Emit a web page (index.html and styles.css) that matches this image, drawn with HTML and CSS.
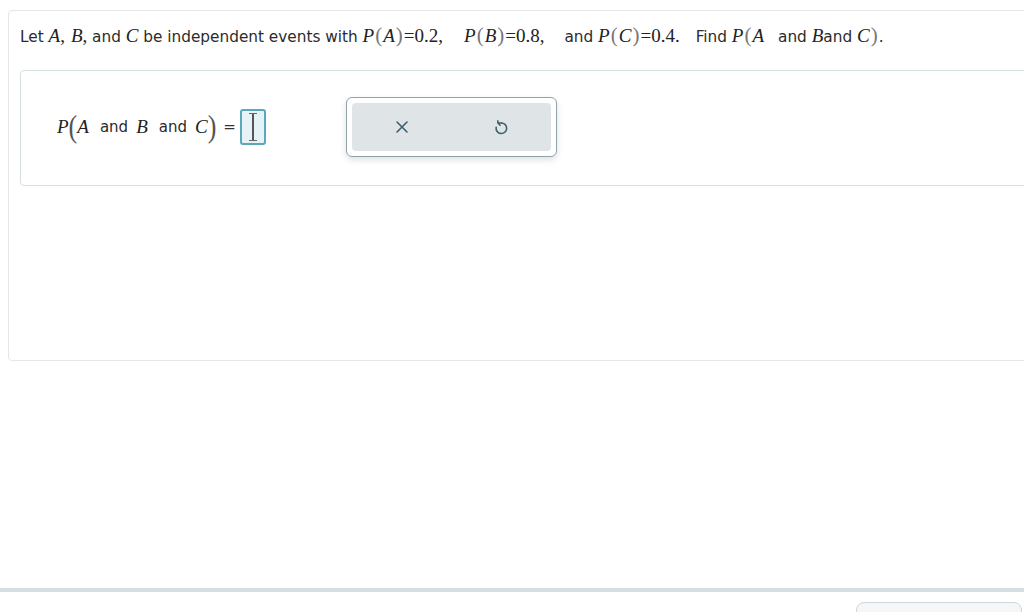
FILE: index.html
```html
<!DOCTYPE html>
<html>
<head>
<meta charset="utf-8">
<link rel="stylesheet" href="styles.css">
</head>
<body>
<div class="page">
  <div class="card">
    <div class="question">
      <span class="txt">Let </span><span class="mi">A</span><span class="mo">,</span><span class="sp4"></span><span class="mi">B</span><span class="mo">,</span><span class="txt"> and </span><span class="mi">C</span><span class="txt"> be independent events with </span><span class="mi">P</span><span class="paren">(</span><span class="mi">A</span><span class="paren">)</span><span class="mo eq">=</span><span class="mn">0.2,</span><span class="sp-wide"></span><span class="mi">P</span><span class="paren">(</span><span class="mi">B</span><span class="paren">)</span><span class="mo eq">=</span><span class="mn">0.8,</span><span class="sp-mid"></span><span class="txt">and </span><span class="mi">P</span><span class="paren">(</span><span class="mi">C</span><span class="paren">)</span><span class="mo eq">=</span><span class="mn">0.4.</span><span class="sp-find"></span><span class="txt">Find </span><span class="mi">P</span><span class="paren">(</span><span class="mi">A</span><span class="sp-mid2"></span><span class="txt">and </span><span class="mi">B</span><span class="txt">and </span><span class="mi">C</span><span class="paren">)</span><span class="txt">.</span>
    </div>
    <div class="answer">
      <div class="expr">
        <span class="mi">P</span><span class="bigparen">(</span><span class="mi">A</span><span class="txt sp-txt">and</span><span class="mi">B</span><span class="txt sp-txt">and</span><span class="mi">C</span><span class="bigparen">)</span><span class="equals">=</span>
        <span class="input"><span class="cursor"></span></span>
      </div>
      <div class="tools">
        <div class="tools-inner">
          <button class="tool" aria-label="clear">
            <svg width="14" height="14" viewBox="0 0 14 14"><path d="M2 2 L12 12 M12 2 L2 12" stroke="#3e5f6b" stroke-width="1.6" fill="none" stroke-linecap="round"/></svg>
          </button>
          <button class="tool" aria-label="undo">
            <svg width="18" height="18" viewBox="0 0 16 16"><path d="M8.3 4.4 A4.7 4.7 0 1 1 3.7 8.3" stroke="#3e5f6b" stroke-width="1.4" fill="none" stroke-linecap="round"/><path d="M8.3 4.4 L5.2 4.4 M5.2 4.4 L5.2 2.4 M5.2 4.4 L7.2 6.4" stroke="#3e5f6b" stroke-width="1.4" fill="none" stroke-linecap="round" stroke-linejoin="round"/></svg>
          </button>
        </div>
      </div>
    </div>
  </div>
  <div class="footer">
    <div class="footer-bar"></div>
    <div class="footer-row">
      <div class="footer-btn"></div>
    </div>
  </div>
</div>
</body>
</html>
```
FILE: styles.css
```css
html, body {
  margin: 0;
  padding: 0;
  background: #ffffff;
}
body {
  font-family: "DejaVu Sans", Verdana, sans-serif;
  font-size: 15px;
  color: #2b2b2b;
  overflow: hidden;
}
.page {
  width: 1024px;
  height: 612px;
  overflow: hidden;
  display: flex;
  flex-direction: column;
}
.card {
  margin: 10px 0 0 8px;
  width: 1100px;
  height: 351px;
  box-sizing: border-box;
  border: 1px solid #e2e8e9;
  border-radius: 4px;
  padding: 11px 0 0 11px;
  flex-shrink: 0;
}
.question {
  height: 26px;
  line-height: 26px;
  white-space: nowrap;
  font-size: 15px;
}
.txt {
  font-family: "DejaVu Sans", Verdana, sans-serif;
  font-size: 15.3px;
  color: #2b2b2b;
}
.mi {
  font-family: "Liberation Serif", "Times New Roman", serif;
  font-style: italic;
  font-size: 19px;
  color: #222;
}
.mn, .mo {
  font-family: "Liberation Serif", "Times New Roman", serif;
  font-size: 19px;
  color: #222;
}
.eq {
  padding: 0;
}
.sp4 {
  display: inline-block;
  width: 6px;
}
.sp-wide {
  display: inline-block;
  width: 21px;
}
.sp-mid {
  display: inline-block;
  width: 20px;
}
.sp-find {
  display: inline-block;
  width: 16px;
}
.sp-mid2 {
  display: inline-block;
  width: 14px;
}
.paren {
  font-family: "Liberation Serif", "Times New Roman", serif;
  font-size: 21px;
  color: #777;
  padding: 0 1px;
}
.answer {
  margin-top: 22px;
  height: 116px;
  box-sizing: border-box;
  border: 1px solid #d4dfe2;
  border-radius: 4px;
  display: flex;
  align-items: center;
  padding: 0 0 2px 36px;
}
.expr {
  display: flex;
  align-items: center;
  white-space: nowrap;
}
.expr .mi {
  font-size: 19px;
}
.sp-txt {
  margin: 0 8px 0 11px;
  font-size: 15px;
}
.bigparen {
  font-family: "Liberation Serif", "Times New Roman", serif;
  font-size: 26px;
  color: #555;
  transform: scaleY(1.2);
  margin: 0;
  line-height: 1;
}
.equals {
  font-family: "DejaVu Sans", sans-serif;
  font-size: 15px;
  margin: 0 4px 0 7px;
  color: #333;
}
.input {
  width: 26px;
  height: 36px;
  box-sizing: border-box;
  border: 2px solid #5aa8ba;
  border-radius: 3px;
  background: #e6f3f6;
  display: flex;
  align-items: center;
  justify-content: center;
  position: relative;
}
.cursor {
  width: 2px;
  height: 28px;
  background: #555;
  position: relative;
}
.cursor::before, .cursor::after {
  content: "";
  position: absolute;
  left: -3px;
  width: 8px;
  height: 1px;
  background: #666;
}
.cursor::before { top: 0; }
.cursor::after { bottom: 0; }
.tools {
  margin-left: 80px;
  width: 211px;
  height: 60px;
  box-sizing: border-box;
  border: 1px solid #8fa4ab;
  border-radius: 6px;
  background: #fff;
  padding: 5px;
  box-shadow: 0 3px 6px rgba(0, 0, 0, 0.12);
}
.tools-inner {
  height: 100%;
  background: #dfe5e7;
  border-radius: 4px;
  display: flex;
}
.tool {
  flex: 1;
  border: none;
  background: transparent;
  display: flex;
  align-items: center;
  justify-content: center;
  padding: 0;
}
.footer {
  margin-top: 227px;
}
.footer-bar {
  height: 4px;
  background: #d5dfe1;
}
.footer-row {
  display: flex;
  justify-content: flex-end;
  padding: 10px 2px 0 0;
}
.footer-btn {
  width: 166px;
  height: 30px;
  box-sizing: border-box;
  border: 1px solid #cdd6d9;
  border-radius: 8px;
  background: #f4f6f7;
}
```
